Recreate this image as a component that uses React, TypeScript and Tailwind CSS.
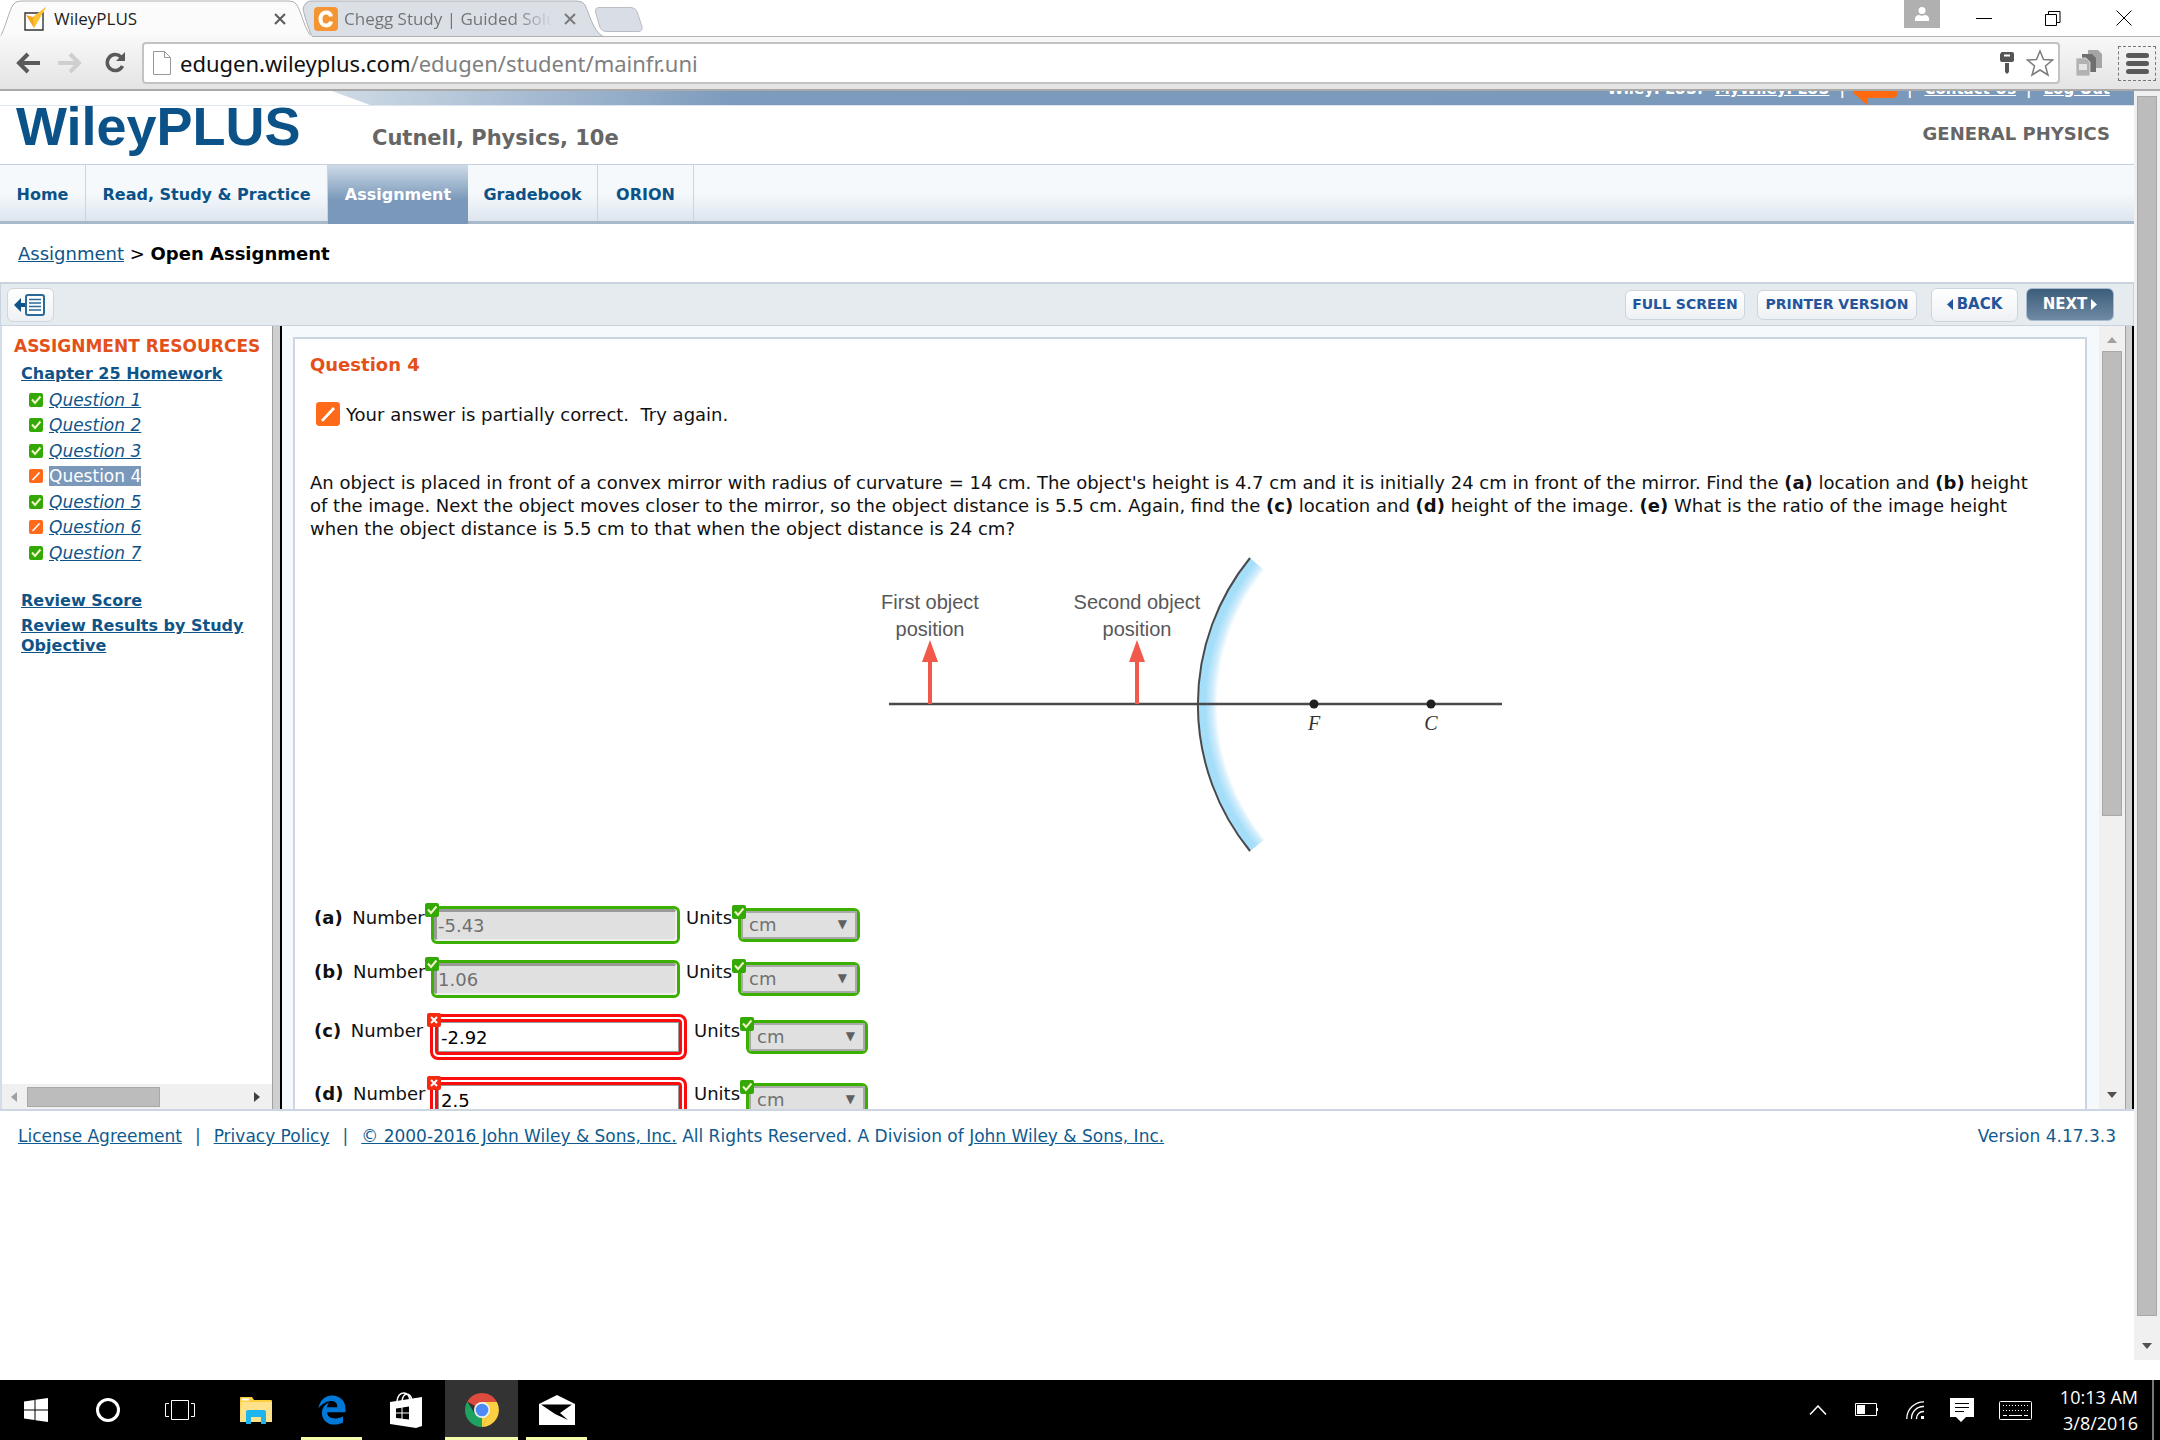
import type { ReactNode } from "react";
import { useState } from "react";
import { FaEdgeLegacy } from "react-icons/fa6";

interface QuestionLink {
  label: string;
  status: "correct" | "partial";
}

interface AnswerRow {
  part: string;
  value: string;
  correct: boolean;
}

const QUESTIONS: QuestionLink[] = [
  { label: "Question 1", status: "correct" },
  { label: "Question 2", status: "correct" },
  { label: "Question 3", status: "correct" },
  { label: "Question 4", status: "partial" },
  { label: "Question 5", status: "correct" },
  { label: "Question 6", status: "partial" },
  { label: "Question 7", status: "correct" },
];

const ANSWERS: AnswerRow[] = [
  { part: "a", value: "-5.43", correct: true },
  { part: "b", value: "1.06", correct: true },
  { part: "c", value: "-2.92", correct: false },
  { part: "d", value: "2.5", correct: false },
];

const NAV_ITEMS = [
  { label: "Home", width: "w-[86px]" },
  { label: "Read, Study & Practice", width: "w-[242px]" },
  { label: "Assignment", width: "w-[140px]" },
  { label: "Gradebook", width: "w-[130px]" },
  { label: "ORION", width: "w-[96px]" },
];

function StatusIcon({ status, className }: { status: "correct" | "partial" | "wrong"; className: string }) {
  return (
    <svg viewBox="0 0 14 14" className={className} aria-hidden="true">
      <rect width="14" height="14" rx="2" fill={status === "correct" ? "#34a805" : status === "partial" ? "#ff6a1a" : "#f52a10"} />
      {status === "correct" && <path d="M3 6.5 6 10l5.5-6.5" fill="none" stroke="#f0f6c8" strokeWidth="2" />}
      {status === "partial" && <path d="M3.500 11 10.500 3.500" fill="none" stroke="#fff" strokeWidth="1.600" />}
      {status === "wrong" && <path d="M4 4l6 6M10 4l-6 6" fill="none" stroke="#fff" strokeWidth="2" />}
    </svg>
  );
}

function VerticalScrollbar({ className, thumb, upArrow = false }: { className: string; thumb: string; upArrow?: boolean }) {
  return (
    <div className={`flex shrink-0 flex-col items-center bg-[#f0f0f0] ${className}`}>
      {upArrow && (
        <svg viewBox="0 0 10 6" className="mb-2 h-[6px] w-[10px] shrink-0" aria-hidden="true">
          <path d="M0 6h10L5 0z" fill="#a0a0a0" />
        </svg>
      )}
      <div className={`w-5 border border-[#a8a8a8] bg-[#bcbcbc] ${thumb}`} />
      <svg viewBox="0 0 10 6" className="mt-auto h-[6px] w-[10px]" aria-hidden="true">
        <path d="M0 0h10L5 6z" fill="#505050" />
      </svg>
    </div>
  );
}

function CloseMark({ stroke }: { stroke: string }) {
  return (
    <svg viewBox="0 0 12 12" className="h-3 w-3" fill="none" stroke={stroke} strokeWidth="2" aria-hidden="true">
      <path d="M1 1l10 10M11 1 1 11" />
    </svg>
  );
}

function BrowserTabs() {
  return (
    <div className="relative flex h-[37px] w-full items-start bg-white">
      <div className="absolute inset-x-0 bottom-0 h-px bg-[#b5b5b5]" />
      <div className="relative z-10 flex h-[37px] w-[312px] items-center pl-6 text-[17px] text-[#1e1e1e]">
        <svg viewBox="0 0 312 37" className="absolute inset-0 h-[37px] w-[312px]" aria-hidden="true">
          <path d="M0 37C4 32 10 8 13 5q2-4 8-4h268q6 0 8 4c4 6 8 26 15 32z" fill="#fbfbfb" stroke="#b0b0b0" strokeWidth="1" />
          <path d="M0 36.5h312" stroke="#f8f8f8" strokeWidth="2" />
        </svg>
        <svg viewBox="0 0 22 24" className="relative mr-2 h-6 w-[22px]" aria-hidden="true">
          <path d="M1 6h18v17H1z" fill="#fff" stroke="#333" strokeWidth="1.4" />
          <path d="M2 8l7 2L22 0 10 21z" fill="#f9a51a" />
          <path d="M9 10 22 0 10 21z" fill="#fcc339" />
        </svg>
        <span className="relative flex-1">WileyPLUS</span>
        <button aria-label="Close WileyPLUS tab" className="relative mr-[26px]">
          <CloseMark stroke="#5a5a5a" />
        </button>
      </div>
      <div className="relative -ml-3 flex h-[37px] w-[303px] items-center pl-[14px] text-[17px] text-[#777]">
        <svg viewBox="0 0 303 37" className="absolute inset-0 h-[37px] w-[303px]" aria-hidden="true">
          <path d="M12 36.500C8 28 4 14 3 9q2-8 8-8h266q6 0 8 4c4 8 8 26 18 31.500z" fill="#dbdfe6" stroke="#aeb0b4" strokeWidth="1" />
        </svg>
        <svg viewBox="0 0 24 24" className="relative mr-[6px] h-6 w-6" aria-hidden="true">
          <rect width="24" height="24" rx="4" fill="#f59433" />
          <path d="M17 9.500C16.500 6.500 14.500 5.500 12.200 5.500 8.800 5.500 6.500 8 6.500 12s2.300 6.500 5.700 6.500c2.300 0 4.300-1 4.800-4" fill="none" stroke="#fff" strokeWidth="4" />
        </svg>
        <span className="relative w-[210px] overflow-hidden whitespace-nowrap bg-gradient-to-r from-[#6f7276] from-80% to-[#dbdfe6] bg-clip-text text-transparent">
          Chegg Study | Guided Solu
        </span>
        <button aria-label="Close Chegg tab" className="relative ml-[10px]">
          <CloseMark stroke="#7a7a7a" />
        </button>
      </div>
      <button aria-label="New tab" className="relative mt-[7px] -ml-2 h-[25px] w-12">
        <svg viewBox="0 0 48 25" className="h-[25px] w-12" aria-hidden="true">
          <path d="M4 .5h32q4 0 6 4l5 15q1 5-4 5H11q-4 0-6-4L.5 5Q0 .5 4 .5z" fill="#d9dde5" stroke="#b9bcc2" />
        </svg>
      </button>
      <div className="ml-auto flex items-start">
        <button aria-label="Profile" className="flex h-7 w-9 items-center justify-center bg-[#b0b0b0]">
          <svg viewBox="0 0 14 14" className="h-[14px] w-[14px]" aria-hidden="true">
            <circle cx="7" cy="3.500" r="3.500" fill="#fff" />
            <path d="M0 14V11q1-3 4-3 3 1.500 6 0 3 0 4 3v3z" fill="#fff" />
          </svg>
        </button>
        <button aria-label="Minimize" className="ml-9 flex h-9 w-4 items-center">
          <span className="h-px w-full bg-black" />
        </button>
        <button aria-label="Restore" className="ml-[53px] flex h-9 w-4 items-center">
          <svg viewBox="0 0 16 16" className="h-4 w-4" fill="none" stroke="#000" aria-hidden="true">
            <path d="M.5 4.500h11v11H.5zM3.500 4V1.500h11.500v11H12" />
          </svg>
        </button>
        <button aria-label="Close window" className="mr-7 ml-[55px] flex h-9 w-4 items-center">
          <svg viewBox="0 0 16 16" className="h-4 w-4" fill="none" stroke="#000" aria-hidden="true">
            <path d="M.5.5l15 15M15.500.5l-15 15" />
          </svg>
        </button>
      </div>
    </div>
  );
}

function AddressBar() {
  return (
    <div className="flex h-[54px] w-full items-center border-b-2 border-[#a9a9a9] bg-gradient-to-b from-[#f8f8f8] to-[#e4e4e4] pr-1 pl-4">
      <button aria-label="Back">
        <svg viewBox="0 0 24 22" className="h-[22px] w-6" fill="none" stroke="#5a5a5a" strokeWidth="4" aria-hidden="true">
          <path d="M12 2 3 11l9 9M3 11h21" />
        </svg>
      </button>
      <button aria-label="Forward" className="ml-[18px]">
        <svg viewBox="0 0 24 22" className="h-[22px] w-6" fill="none" stroke="#cfcfcf" strokeWidth="4" aria-hidden="true">
          <path d="M12 2l9 9-9 9M21 11H0" />
        </svg>
      </button>
      <button aria-label="Reload" className="ml-[22px]">
        <svg viewBox="0 0 22 22" className="h-[22px] w-[22px]" aria-hidden="true">
          <path d="M17 5A8 8 0 1 0 18.500 14" fill="none" stroke="#5a5a5a" strokeWidth="3.500" />
          <path d="M21 0v9h-9z" fill="#5a5a5a" />
        </svg>
      </button>
      <div className="ml-4 flex h-[42px] min-w-0 flex-1 items-center rounded border-2 border-[#c3c3c3] bg-white pr-1 pl-[9px]">
        <svg viewBox="0 0 18 24" className="h-6 w-[18px] shrink-0" fill="#fff" stroke="#999" aria-hidden="true">
          <path d="M.5.5h11l6 6v17H.5zM11.500.5v6h6" />
        </svg>
        <span className="ml-[9px] flex-1 font-['Noto_Sans',sans-serif] text-[22px] text-[#808080]">
          <span className="text-[#111]">edugen.wileyplus.com</span>/edugen/student/mainfr.uni
        </span>
        <svg viewBox="0 0 14 22" className="h-[22px] w-[14px]" fill="#555" aria-hidden="true">
          <path d="M1 1q0-1 1-1h10q2 0 2 2v6q0 2-2 2H2Q0 10 0 8V2zM5 11h4v9l-2 2-2-2z" />
          <path d="M4 2.500h6v2H4z" fill="#fff" />
        </svg>
        <svg viewBox="0 0 28 28" className="ml-3 h-7 w-7" fill="#fff" stroke="#7c7c7c" strokeWidth="1.500" aria-hidden="true">
          <path d="M14 2l3.500 8.500 9 .5-7 6 2.500 9-8-5-8 5 2.500-9-7-6 9-.5z" />
        </svg>
      </div>
      <svg viewBox="0 0 26 26" className="ml-4 h-[26px] w-[26px]" aria-hidden="true">
        <path d="M12 0h10l4 4v14H12z" fill="#a5a5a5" />
        <path d="M6 4h10l4 4v14H6z" fill="#6f6f6f" />
        <path d="M0 8h10l4 4v14H0z" fill="#b2b2b2" stroke="#efefef" strokeWidth=".7" />
        <path d="M3 14h8v6H3z" fill="#e5e5e5" />
      </svg>
      <button aria-label="Chrome menu" className="ml-4 flex h-[35px] w-[38px] flex-col items-center justify-center gap-[3px] border border-dashed border-[#777]">
        <span className="h-[5px] w-[23px] rounded-sm bg-[#5a5a5a]" />
        <span className="h-[5px] w-[23px] rounded-sm bg-[#5a5a5a]" />
        <span className="h-[5px] w-[23px] rounded-sm bg-[#5a5a5a]" />
      </button>
    </div>
  );
}

function SiteHeader() {
  return (
    <header>
      <div className="ml-[332px] flex h-[14px] items-end justify-end overflow-hidden bg-[linear-gradient(90deg,#cfdbe6,#7d9bbd_400px,#7998ba)] pr-6 text-[15px] leading-5 font-bold text-white [clip-path:polygon(0_0,100%_0,100%_100%,38px_100%)]">
        <div className="flex items-center pb-[6px]">
          <span>WileyPLUS:</span>
          <a href="#my" className="ml-3 underline">MyWileyPLUS</a>
          <span className="ml-[10px]">|</span>
          <svg viewBox="0 0 44 32" className="-mt-2 -mb-[6px] ml-2 h-8 w-11 self-end" aria-hidden="true">
            <path d="M4 0h36q4 0 4 4v17q0 4-4 4H15l-1 7-10-9q-4-2-4-6V4q0-4 4-4z" fill="#ff6a10" />
          </svg>
          <span className="ml-[10px]">|</span>
          <a href="#contact" className="ml-3 underline">Contact Us</a>
          <span className="ml-[10px]">|</span>
          <a href="#logout" className="ml-3 underline">Log Out</a>
        </div>
      </div>
      <div className="flex h-[59px] items-start border-t border-[#dfe5ee] pr-6 pl-4">
        <span className="w-[356px] shrink-0 font-['Liberation_Sans',sans-serif] text-[54px] leading-10 font-bold text-[#0b5288]">WileyPLUS</span>
        <span className="mt-[18px] flex-1 text-[21px] leading-7 font-bold text-[#666]">Cutnell, Physics, 10e</span>
        <span className="mt-4 text-[18px] leading-6 font-bold text-[#666]">GENERAL PHYSICS</span>
      </div>
      <nav className="flex h-[60px] border-t border-b-[3px] border-t-[#c4d0de] border-b-[#a9b9cc] bg-[linear-gradient(#f5f9fc_50%,#dde5ef)] text-[16px] font-bold">
        {NAV_ITEMS.map((item) =>
          item.label === "Assignment" ? (
            <a key={item.label} href="#assignment" className={`-mb-[3px] flex items-center justify-center bg-[linear-gradient(#cddae6,#7998ba_60%)] text-white ${item.width}`}>
              {item.label}
            </a>
          ) : (
            <a key={item.label} href="#nav" className={`flex items-center justify-center border-r border-[#cbd5e2] pt-[3px] text-[#0b5288] ${item.width}`}>
              {item.label}
            </a>
          ),
        )}
      </nav>
    </header>
  );
}

function FrameButton({ children, className }: { children: ReactNode; className: string }) {
  return (
    <button className={`flex items-center justify-center gap-1 rounded-md border font-bold whitespace-nowrap ${className}`}>
      {children}
    </button>
  );
}

function FrameToolbar() {
  return (
    <div className="flex h-11 shrink-0 items-center border border-t-2 border-[#c9d3e0] bg-[#e6ebf0] pr-[19px] pl-[6px]">
      <button aria-label="Hide resources" className="flex h-[34px] w-[47px] items-center rounded-md border border-[#d0d6de] bg-gradient-to-b from-white to-[#eef1f4] pl-[6px]">
        <svg viewBox="0 0 32 22" className="h-[22px] w-8" aria-hidden="true">
          <path d="M0 11l7-7v5h4v4H7v5z" fill="#0f5488" />
          <rect x="12" y="1" width="18" height="20" rx="2" fill="#fff" stroke="#2a6a9b" strokeWidth="2" />
          <path d="M15 5.500h12M15 9h12M15 12.500h12M15 16h12" stroke="#2a6a9b" strokeWidth="1.500" />
        </svg>
      </button>
      <div className="ml-auto flex items-center">
        <FrameButton className="h-[30px] w-[120px] border-[#ccd5df] bg-gradient-to-b from-white to-[#eef1f4] text-[14px] text-[#24559a]">FULL SCREEN</FrameButton>
        <FrameButton className="ml-3 h-[30px] w-[160px] border-[#ccd5df] bg-gradient-to-b from-white to-[#eef1f4] text-[14px] text-[#24559a]">PRINTER VERSION</FrameButton>
        <FrameButton className="ml-[14px] h-[34px] w-[87px] border-[#ccd5df] bg-gradient-to-b from-white to-[#eef1f4] text-[15px] text-[#24559a]">
          <svg viewBox="0 0 6 11" className="h-[11px] w-[6px]" aria-hidden="true"><path d="M6 0v11L0 5.500z" fill="#24559a" /></svg>
          BACK
        </FrameButton>
        <FrameButton className="ml-2 h-[33px] w-[88px] border-[#a9bccd] bg-gradient-to-b from-[#3c5d7a] to-[#6f8aa4] text-[15px] text-white">
          NEXT
          <svg viewBox="0 0 6 11" className="h-[11px] w-[6px]" aria-hidden="true"><path d="M0 0v11l6-5.500z" fill="#fff" /></svg>
        </FrameButton>
      </div>
    </div>
  );
}

function Sidebar() {
  return (
    <aside className="flex w-[272px] shrink-0 flex-col border-l-2 border-[#d3dce8] bg-white text-[17px] text-[#0f5488]">
      <div className="flex-1 pt-2">
        <h2 className="pl-3 text-[17px] leading-6 font-bold whitespace-nowrap text-[#e4501a]">ASSIGNMENT RESOURCES</h2>
        <a href="#chapter" className="ml-[19px] block pt-1 text-[16px] leading-6 font-bold whitespace-nowrap underline">Chapter 25 Homework</a>
        <ul className="pl-[27px]">
          {QUESTIONS.map((question) => (
            <li key={question.label} className="flex h-[26px] items-center not-first:-mt-px first:mt-px nth-[2n+3]:mt-0">
              <StatusIcon status={question.status} className="mr-[6px] h-[14px] w-[14px]" />
              <a
                href="#question"
                className={question.label === "Question 4" ? "bg-[#7998ba] leading-5 text-white" : "leading-5 italic underline"}
              >
                {question.label}
              </a>
            </li>
          ))}
        </ul>
        <div className="mt-[25px] flex flex-col items-start gap-[5px] pl-[19px] text-[16px] leading-5 font-bold">
          <a href="#score" className="underline">Review Score</a>
          <a href="#objective" className="underline">Review Results by Study<br />Objective</a>
        </div>
      </div>
      <div className="flex h-[25px] items-center bg-[#f0f0f0] pr-3 pl-[9px]">
        <svg viewBox="0 0 6 10" className="h-[10px] w-[6px]" aria-hidden="true"><path d="M6 0v10L0 5z" fill="#a0a0a0" /></svg>
        <div className="ml-[10px] h-5 w-[133px] border border-[#a8a8a8] bg-[#bcbcbc]" />
        <svg viewBox="0 0 6 10" className="ml-auto h-[10px] w-[6px]" aria-hidden="true"><path d="M0 0v10l6-5z" fill="#404040" /></svg>
      </div>
    </aside>
  );
}

function MirrorDiagram() {
  return (
    <svg viewBox="860 550 680 310" className="mx-auto h-[310px] w-[680px]" role="img" aria-label="Convex mirror with two object positions">
      <defs>
        <radialGradient id="glass" gradientUnits="userSpaceOnUse" cx="1430" cy="704" r="232">
          <stop offset="0.915" stopColor="#ffffff" />
          <stop offset="0.94" stopColor="#cdebfb" />
          <stop offset="0.97" stopColor="#a4def9" />
          <stop offset="1" stopColor="#a4def9" />
        </radialGradient>
      </defs>
      <path d="M1250 558A232 232 0 0 0 1250 851L1264 840A217 217 0 0 1 1264 570z" fill="url(#glass)" />
      <path d="M1250 558A232 232 0 0 0 1250 851" fill="none" stroke="#4a4a4c" strokeWidth="2" />
      <path d="M889 704h613" stroke="#4a4a4c" strokeWidth="2.500" />
      <g fill="#f1594b">
        <path d="M928 704v-42h-6l8-22 8 22h-6v42z" />
        <path d="M1135 704v-42h-6l8-22 8 22h-6v42z" />
      </g>
      <circle cx="1314" cy="704" r="4.500" fill="#231f20" />
      <circle cx="1431" cy="704" r="4.500" fill="#231f20" />
      <g className="font-['Liberation_Sans',sans-serif] text-[20px]" fill="#58585a" textAnchor="middle">
        <text x="930" y="609">First object</text>
        <text x="930" y="636">position</text>
        <text x="1137" y="609">Second object</text>
        <text x="1137" y="636">position</text>
      </g>
      <g className="font-['Liberation_Serif',serif] text-[20px] italic" fill="#333" textAnchor="middle">
        <text x="1314" y="730">F</text>
        <text x="1431" y="730">C</text>
      </g>
    </svg>
  );
}

function AnswerField({ row }: { row: AnswerRow }) {
  const [value, setValue] = useState(row.value);
  const id = `number-${row.part}`;

  return (
    <div className={row.correct ? "flex h-[54px] items-start" : "flex h-[63px] items-start"}>
      <label htmlFor={id} className={`shrink-0 whitespace-pre leading-6 ${row.correct ? "w-[117px]" : "mt-[5px] w-[116px]"}`}>
        <b className="mr-1">({row.part})</b> Number
      </label>
      {row.correct ? (
        <div className="relative w-[249px] rounded-md border-[3px] border-[#3bb000]">
          <input
            id={id}
            value={value}
            disabled
            readOnly
            className="block h-8 w-full rounded-sm border-t-[3px] border-r-2 border-b-2 border-l-[3px] border-t-[#999] border-r-[#eee] border-b-[#eee] border-l-[#999] bg-[#e0e0e0] pl-px text-[#707070]"
          />
          <StatusIcon status="correct" className="absolute -top-[6px] -left-[9px] h-[14px] w-[14px]" />
        </div>
      ) : (
        <div className="relative w-[257px] rounded-lg border-[3px] border-[#fb0d0d] p-[2px]">
          <div className="rounded border-[3px] border-[#fb0d0d]">
            <input
              id={id}
              value={value}
              onChange={(e) => setValue(e.target.value)}
              className="block h-[30px] w-full border border-[#999] bg-white pl-[2px] text-black outline-none"
            />
          </div>
          <StatusIcon status="wrong" className="absolute -top-1 -left-[6px] h-[14px] w-[14px]" />
        </div>
      )}
      <label htmlFor={`units-${row.part}`} className={`shrink-0 leading-6 ${row.correct ? "ml-[6px] w-[52px]" : "mt-[5px] ml-[7px] w-[52px]"}`}>
        Units
      </label>
      <div className={`relative w-[122px] rounded-md border-[3px] border-[#3bb000] ${row.correct ? "mt-[2px]" : "mt-[6px]"}`}>
        <select
          id={`units-${row.part}`}
          disabled
          defaultValue="cm"
          className="block h-7 w-full appearance-none border-2 border-[#a9a9a9] bg-[#e0e0e0] pl-[6px] leading-5 text-[#707070] opacity-100"
        >
          <option>cm</option>
        </select>
        <span className="pointer-events-none absolute top-[3px] right-[10px] text-[12px] leading-5 text-[#606060]">▼</span>
        <StatusIcon status="correct" className="absolute -top-[6px] -left-[9px] h-[14px] w-[14px]" />
      </div>
    </div>
  );
}

function QuestionPanel() {
  return (
    <main className="mt-[11px] mr-3 ml-[11px] min-w-0 flex-1 overflow-hidden border-x-2 border-t-2 border-[#ccd6e3] bg-white pt-[14px] pr-6 pl-[15px] text-[18px] text-[#111]">
      <h1 className="leading-6 font-bold text-[#e4501a]">Question 4</h1>
      <p className="mt-[25px] flex h-6 items-center whitespace-pre">
        <StatusIcon status="partial" className="mr-[6px] ml-[6px] h-6 w-6" />
        Your answer is partially correct.  Try again.
      </p>
      <p className="mt-[45px] pr-4 leading-[23px]">
        An object is placed in front of a convex mirror with radius of curvature = 14 cm. The object's height is 4.7 cm and it is initially 24 cm in front of the mirror. Find the <b>(a)</b> location and <b>(b)</b> height of the image. Next the object moves closer to the mirror, so the object distance is 5.5 cm. Again, find the <b>(c)</b> location and <b>(d)</b> height of the image. <b>(e)</b> What is the ratio of the image height when the object distance is 5.5 cm to that when the object distance is 24 cm?
      </p>
      <div className="mt-[10px] pl-[28px]">
        <MirrorDiagram />
      </div>
      <form className="mt-[46px] pl-1" onSubmit={(e) => e.preventDefault()}>
        {ANSWERS.map((row) => (
          <AnswerField key={row.part} row={row} />
        ))}
      </form>
    </main>
  );
}

function Taskbar() {
  return (
    <footer className="flex h-[60px] shrink-0 items-stretch bg-black text-white">
      <button aria-label="Start" className="flex w-[72px] items-center justify-center">
        <svg viewBox="0 0 24 24" className="h-6 w-6" fill="#fff" aria-hidden="true">
          <path d="M0 3.500 10.500 2v9.500H0zM11.500 1.800 24 0v11.500H11.500zM0 12.500h10.500V22L0 20.500zM11.500 12.500H24V24l-12.500-1.800z" />
        </svg>
      </button>
      <button aria-label="Cortana" className="flex w-[72px] items-center justify-center">
        <span className="h-6 w-6 rounded-full border-[3px] border-white" />
      </button>
      <button aria-label="Task view" className="flex w-[72px] items-center justify-center">
        <svg viewBox="0 0 30 20" className="h-5 w-[30px]" fill="none" stroke="#fff" aria-hidden="true">
          <path d="M6.500.5h17v19h-17zM4 3.500H.5v13H4M26 3.500h3.500v13H26" />
        </svg>
      </button>
      <button aria-label="File Explorer" className="flex w-20 items-center justify-center">
        <svg viewBox="0 0 32 27" className="h-[27px] w-8" aria-hidden="true">
          <path d="M0 1q0-1 1-1h11l2 3h17q1 0 1 1v21H0z" fill="#fbcf3d" />
          <path d="M1 5h31v20H0z" fill="#fde18b" />
          <path d="M2 1.500h7v2H2z" fill="#fff" />
          <path d="M6 27V15q0-2 2-2h16q2 0 2 2v12h-5v-7H11v7z" fill="#1eb5ee" />
        </svg>
      </button>
      <button aria-label="Edge" className="ml-[5px] flex w-[61px] items-center justify-center border-b-[3px] border-[#f4fbab] pt-[3px]">
        <FaEdgeLegacy className="h-8 w-[30px] text-[#0078d7]" />
      </button>
      <button aria-label="Store" className="ml-2 flex w-[72px] items-center justify-center">
        <svg viewBox="0 0 32 36" className="h-9 w-8" aria-hidden="true">
          <path d="M7 9C8 2 11 1 14 1s5 2 6 7M12 9c1-6 3-7 5-7s4 2 5 6" fill="none" stroke="#fff" strokeWidth="1.500" />
          <path d="M0 10 32 5v29l-6 2L0 32z" fill="#fff" />
          <path d="M6 16.500l5.500-.8V20.500H6zM12.500 15.500 19 14.500v6h-6.500zM6 21.500h5.500v5L6 26zM12.500 21.500H19v6l-6.500-.8z" fill="#000" />
        </svg>
      </button>
      <button aria-label="Chrome" className="ml-[3px] flex w-[73px] items-center justify-center border-b-[3px] border-[#f4fbab] bg-[#333] pt-[3px]">
        <svg viewBox="0 0 34 34" className="h-[34px] w-[34px]" aria-hidden="true">
          <path d="M17 17 2.300 8.500A17 17 0 0 1 31.700 8.500z" fill="#dd4b3e" />
          <path d="M17 17V9h14.900A17 17 0 0 1 17 34z" fill="#fdd042" />
          <path d="M2.300 8.500A17 17 0 0 0 17 34l6.900-13-6.900-4-7 4z" fill="#1da261" />
          <path d="M17 34l7-13-7-4z" fill="#fdd042" />
          <circle cx="17" cy="17" r="8" fill="#f1f1f1" />
          <circle cx="17" cy="17" r="6.300" fill="#4c8bf5" />
        </svg>
      </button>
      <button aria-label="Mail" className="ml-2 flex w-[61px] items-center justify-center border-b-[3px] border-[#f4fbab] pt-[3px]">
        <svg viewBox="0 0 36 30" className="h-[30px] w-9" aria-hidden="true">
          <path d="M0 9 18 0l18 9v21H0z" fill="#fff" />
          <path d="M2 9.500h31L21 18l8 7-13-6z" fill="#000" />
        </svg>
      </button>
      <div className="ml-auto flex items-center">
        <svg viewBox="0 0 18 10" className="h-[10px] w-[18px]" fill="none" stroke="#fff" strokeWidth="1.500" aria-hidden="true">
          <path d="M1 9.500 9 1l8 8.500" />
        </svg>
        <svg viewBox="0 0 24 14" className="ml-7 h-[14px] w-6" aria-hidden="true">
          <path d="M.5.5h21v12H.5zM22.500 5v3" fill="none" stroke="#fff" />
          <path d="M2 2h8v9H2z" fill="#fff" />
        </svg>
        <svg viewBox="0 0 18 18" className="ml-[27px] h-[18px] w-[18px]" fill="none" stroke="#fff" strokeWidth="1.300" aria-hidden="true">
          <path d="M.8 18A17 17 0 0 1 18 .8M5.500 18A12 12 0 0 1 18 5.500M10.500 18A7 7 0 0 1 18 10.500" />
          <path d="M15 15h3v3h-3z" fill="#fff" stroke="none" />
        </svg>
        <svg viewBox="0 0 24 24" className="ml-[26px] h-6 w-6" aria-hidden="true">
          <path d="M0 0h24v19h-8l-5 5-5-5H0z" fill="#fff" />
          <path d="M5 5.500h14M5 9.500h14M5 13.500h9" stroke="#000" />
        </svg>
        <svg viewBox="0 0 33 19" className="ml-[25px] h-[19px] w-[33px]" fill="none" stroke="#fff" aria-hidden="true">
          <rect x=".5" y=".5" width="32" height="18" rx="1" />
          <path d="M4 4.500h26M4 9.500h26" strokeDasharray="1 2" />
          <path d="M4 14.500h4M10 14.500h13M25 14.500h4" />
        </svg>
        <div className="ml-7 text-right text-[18px] leading-[26px] whitespace-nowrap">
          <div>10:13 AM</div>
          <div>3/8/2016</div>
        </div>
        <div className="mr-[6px] ml-[14px] h-[60px] w-[2px] bg-[#777]" />
      </div>
    </footer>
  );
}

export default function App() {
  return (
    <div className="flex h-screen w-full flex-col bg-white font-['Open_Sans','Noto_Sans',sans-serif]">
      <BrowserTabs />
      <AddressBar />
      <div className="flex min-h-0 flex-1 bg-white pb-5">
        <div className="flex min-w-0 flex-1 flex-col font-['DejaVu_Sans',Verdana,sans-serif]">
          <SiteHeader />
          <div className="flex h-[58px] shrink-0 items-center pl-[18px] text-[18px] whitespace-pre text-black">
            <a href="#assignment" className="text-[#0f5488] underline">Assignment</a> &gt; <b>Open Assignment</b>
          </div>
          <FrameToolbar />
          <section className="flex h-[785px] shrink-0 border-b-2 border-[#ccd6e3] bg-[#f5f9fc]">
            <Sidebar />
            <div className="w-[10px] shrink-0 border-r-2 border-l border-r-black border-l-[#a0a0a0] bg-[#cfcfcf]" />
            <QuestionPanel />
            <VerticalScrollbar className="w-[26px] pt-[11px] pb-[11px]" thumb="h-[465px]" upArrow />
            <div className="w-[9px] shrink-0 border-r-2 border-l border-r-black border-l-[#a0a0a0] bg-[#cfcfcf]" />
          </section>
          <div className="flex items-center pt-[13px] pr-[18px] pl-[18px] text-[17px] leading-6 whitespace-pre text-[#0f5a8e]">
            <a href="#license" className="underline">License Agreement</a>
            <span className="mx-[13px]">|</span>
            <a href="#privacy" className="underline">Privacy Policy</a>
            <span className="mx-[13px]">|</span>
            <a href="#wiley" className="underline">© 2000-2016 John Wiley &amp; Sons, Inc.</a>
            <span> All Rights Reserved. A Division of </span>
            <a href="#sons" className="underline">John Wiley &amp; Sons, Inc.</a>
            <span className="ml-auto">Version 4.17.3.3</span>
          </div>
        </div>
        <VerticalScrollbar className="w-[26px] pt-[5px] pb-[11px]" thumb="h-[1220px]" />
      </div>
      <Taskbar />
    </div>
  );
}
